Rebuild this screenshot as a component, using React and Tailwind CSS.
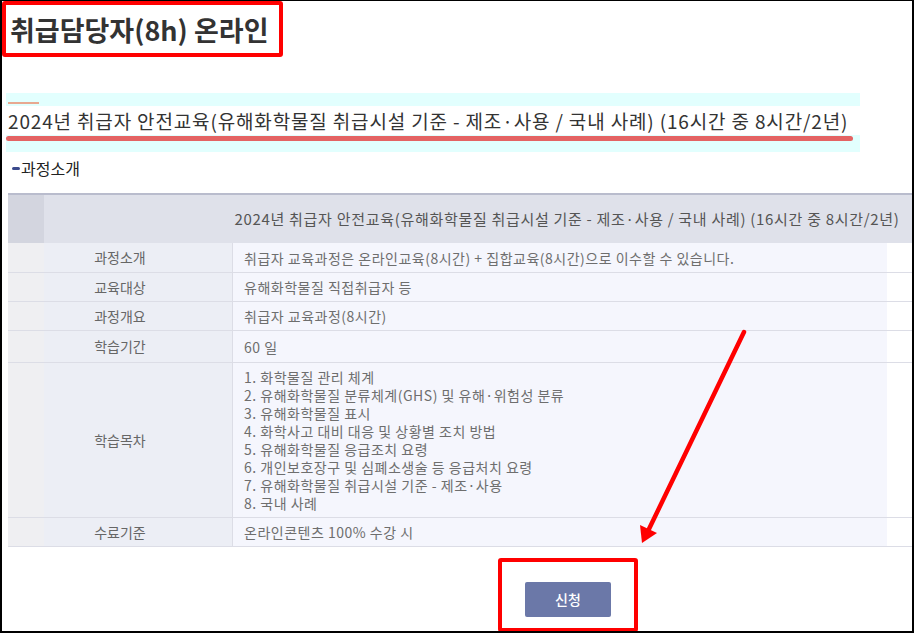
import React from "react";

const rows = [
  { label: "과정소개", h: "h-[30px]", content: ["취급자 교육과정은 온라인교육(8시간) + 집합교육(8시간)으로 이수할 수 있습니다."] },
  { label: "교육대상", h: "h-[29px]", content: ["유해화학물질 직접취급자 등"] },
  { label: "과정개요", h: "h-[29px]", content: ["취급자 교육과정(8시간)"] },
  { label: "학습기간", h: "h-[32px]", content: ["60 일"] },
  {
    label: "학습목차",
    h: "h-[155px]",
    content: [
      "1. 화학물질 관리 체계",
      "2. 유해화학물질 분류체계(GHS) 및 유해·위험성 분류",
      "3. 유해화학물질 표시",
      "4. 화학사고 대비 대응 및 상황별 조치 방법",
      "5. 유해화학물질 응급조치 요령",
      "6. 개인보호장구 및 심폐소생술 등 응급처치 요령",
      "7. 유해화학물질 취급시설 기준 - 제조·사용",
      "8. 국내 사례",
    ],
  },
  { label: "수료기준", h: "h-[29px]", content: ["온라인콘텐츠 100% 수강 시"] },
];

const TITLE = "2024년 취급자 안전교육(유해화학물질 취급시설 기준 - 제조·사용 / 국내 사례) (16시간 중 8시간/2년)";

export default function App() {
  return (
    <div className="relative w-[914px] h-[633px] overflow-hidden bg-white border-t border-l-2 border-r-2 border-b-2 border-black font-['Noto_Sans_CJK_KR',sans-serif]">
      {/* Title */}
      <div className="w-[281px] h-[56px] border-4 border-[#ff0000] rounded-[3px] flex items-center pl-[4px]">
        <span className="text-[27px] font-bold text-[#333] tracking-[0px] leading-none whitespace-nowrap">
          취급담당자(8h) 온라인
        </span>
      </div>

      {/* Section band */}
      <div className="mt-[36px] ml-[4px] w-[854px]">
        <div className="h-[13px] bg-[#e2fffe] pt-[9px] pl-[2px]">
          <div className="w-[31px] h-[2px] bg-[#e8a890]" />
        </div>
        <div className="h-[29px] bg-white flex items-center pl-[2px] text-[19px] tracking-[0.85px] text-[#333] whitespace-nowrap leading-none">
          {TITLE}
        </div>
        <div className="h-[17px] bg-[#e2fffe] pt-[1px]">
          <div className="w-[847px] h-[5px] rounded-full bg-[#e46363]" />
        </div>
      </div>

      {/* Sub heading */}
      <div className="mt-[6px] h-[20px] flex items-center pl-[10px]">
        <div className="w-[8px] h-[3px] rounded-full bg-[#3b4a8c] mr-[1px]" />
        <span className="text-[16px] text-[#222] leading-none">과정소개</span>
      </div>

      {/* Table */}
      <div className="mt-[15px] ml-[6px] w-[904px]">
        <div className="grid grid-cols-[224px_680px] h-[50px] border-t-2 border-[#b9bccd]">
          <div className="bg-[linear-gradient(to_right,#d3d5df_36px,#dfe1ea_36px)]" />
          <div className="bg-[#dfe1ea] flex items-center justify-center pr-[10px] text-[15px] tracking-[0.7px] text-[#555] whitespace-nowrap">
            {TITLE}
          </div>
        </div>
        {rows.map((r) => (
          <div key={r.label} className={`grid grid-cols-[224px_680px] ${r.h} border-b border-[#dcdde6]`}>
            <div className="bg-[linear-gradient(to_right,#efeff2_36px,#eceef5_36px)] flex items-center justify-center text-[14px] text-[#666]">
              {r.label}
            </div>
            <div className="bg-[linear-gradient(to_right,#f5f6fd_654px,#ffffff_654px)] border-l border-[#dcdde6] flex flex-col justify-center pl-[11px] text-[14px] tracking-[0.5px] text-[#6e6e6e] leading-[18px] whitespace-nowrap">
              {r.content.map((c) => (
                <div key={c} className="h-[18px]">{c}</div>
              ))}
            </div>
          </div>
        ))}
      </div>

      {/* Button with red box */}
      <div className="mt-[11px] ml-[496px] w-[140px] h-[74px] border-4 border-[#ff0000] rounded-[3px] pt-[20px] pl-[23px]">
        <button className="w-[86px] h-[35px] bg-[#6b78a8] rounded-[2px] text-white text-[14px] font-medium">
          신청
        </button>
      </div>

      {/* Red arrow annotation */}
      <svg className="absolute left-0 top-0 pointer-events-none" width="914" height="633" viewBox="-2 -1 914 633">
        <line x1="740" y1="330" x2="645" y2="527" stroke="#ff0000" strokeWidth="4.5" strokeLinecap="round" />
        <polygon points="638,541 653,531 636,523" fill="#ff0000" />
      </svg>
    </div>
  );
}
